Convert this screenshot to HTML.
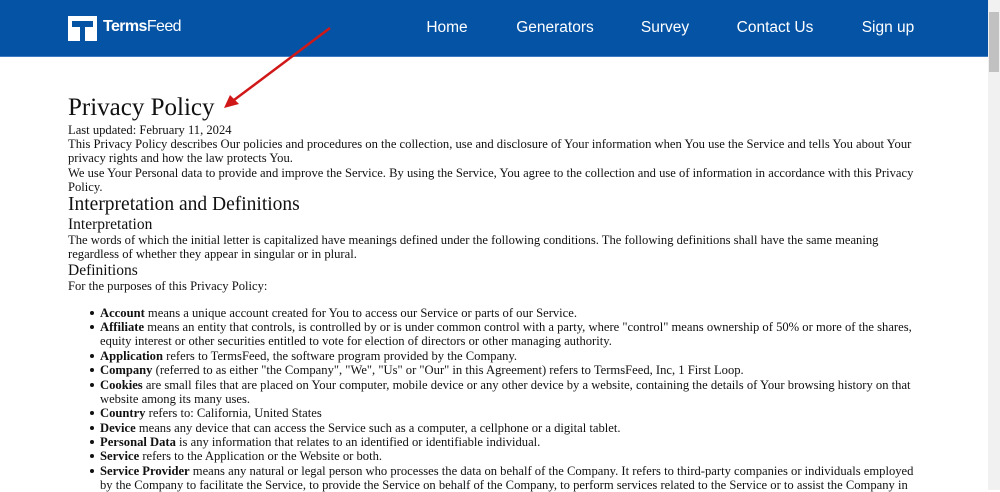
<!DOCTYPE html>
<html><head><meta charset="utf-8"><style>
*{margin:0;padding:0;box-sizing:border-box}
body{width:1000px;height:490px;overflow:hidden;background:#fff;position:relative;font-family:"Liberation Serif",serif;color:#111}
.nav{position:absolute;left:0;top:0;width:988px;height:57px;background:#0553a5;border-bottom:1px solid #3d7cc0}
.nav a{position:absolute;top:19px;color:#fff;font-family:"Liberation Sans",sans-serif;font-size:15.5px;transform:translateX(-50%);white-space:nowrap}
.l{position:absolute;left:68px;font-size:12.6px;line-height:14px;white-space:nowrap}
.li{left:100px}
.li:before{content:"";position:absolute;left:-10px;top:5px;width:4px;height:4px;border-radius:50%;background:#111}
.cont:before{display:none}
.sb{position:absolute;right:0;top:0;width:12px;height:490px;background:#f1f1f1}
.th{position:absolute;right:1px;top:12px;width:10px;height:60px;background:#c1c1c1}
</style></head><body>
<div class="nav">
<svg style="position:absolute;left:68px;top:16px" width="29" height="25" viewBox="0 0 29 25"><rect width="29" height="25" fill="#fff"/><path d="M4 5H25V11H17V25H12V11H4Z" fill="#0553a5"/></svg>
<div style="position:absolute;left:103px;top:18px;color:#fff;font-family:'Liberation Sans',sans-serif;font-size:16px;letter-spacing:-0.6px"><b>Terms</b>Feed</div>
<a style="left:447px">Home</a><a style="left:555px">Generators</a><a style="left:665px">Survey</a><a style="left:775px">Contact Us</a><a style="left:888px">Sign up</a>
</div>
<div class="sb"><div class="th"></div></div>
<svg style="position:absolute;left:0;top:0" width="1000" height="490"><line x1="330" y1="28" x2="234" y2="100" stroke="#d01818" stroke-width="2.5"/><path d="M224 108L230 95L239 104Z" fill="#d01818"/></svg>
<div class="l" style="top:94px;font-size:25px;line-height:28px">Privacy Policy</div>
<div class="l" style="top:123px">Last updated: February 11, 2024</div>
<div class="l" style="top:137px">This Privacy Policy describes Our policies and procedures on the collection, use and disclosure of Your information when You use the Service and tells You about Your</div>
<div class="l" style="top:151px">privacy rights and how the law protects You.</div>
<div class="l" style="top:166px">We use Your Personal data to provide and improve the Service. By using the Service, You agree to the collection and use of information in accordance with this Privacy</div>
<div class="l" style="top:180px">Policy.</div>
<div class="l" style="top:194px;font-size:19.5px;line-height:22px">Interpretation and Definitions</div>
<div class="l" style="top:216px;font-size:15.5px;line-height:17px">Interpretation</div>
<div class="l" style="top:233px">The words of which the initial letter is capitalized have meanings defined under the following conditions. The following definitions shall have the same meaning</div>
<div class="l" style="top:247px">regardless of whether they appear in singular or in plural.</div>
<div class="l" style="top:262px;font-size:15.5px;line-height:17px">Definitions</div>
<div class="l" style="top:279px">For the purposes of this Privacy Policy:</div>
<div class="l li" style="top:306px"><b>Account</b> means a unique account created for You to access our Service or parts of our Service.</div>
<div class="l li" style="top:320px"><b>Affiliate</b> means an entity that controls, is controlled by or is under common control with a party, where "control" means ownership of 50% or more of the shares,</div>
<div class="l li cont" style="top:334px">equity interest or other securities entitled to vote for election of directors or other managing authority.</div>
<div class="l li" style="top:349px"><b>Application</b> refers to TermsFeed, the software program provided by the Company.</div>
<div class="l li" style="top:363px"><b>Company</b> (referred to as either "the Company", "We", "Us" or "Our" in this Agreement) refers to TermsFeed, Inc, 1 First Loop.</div>
<div class="l li" style="top:378px"><b>Cookies</b> are small files that are placed on Your computer, mobile device or any other device by a website, containing the details of Your browsing history on that</div>
<div class="l li cont" style="top:392px">website among its many uses.</div>
<div class="l li" style="top:406px"><b>Country</b> refers to: California, United States</div>
<div class="l li" style="top:421px"><b>Device</b> means any device that can access the Service such as a computer, a cellphone or a digital tablet.</div>
<div class="l li" style="top:435px"><b>Personal Data</b> is any information that relates to an identified or identifiable individual.</div>
<div class="l li" style="top:449px"><b>Service</b> refers to the Application or the Website or both.</div>
<div class="l li" style="top:464px"><b>Service Provider</b> means any natural or legal person who processes the data on behalf of the Company. It refers to third-party companies or individuals employed</div>
<div class="l li cont" style="top:478px">by the Company to facilitate the Service, to provide the Service on behalf of the Company, to perform services related to the Service or to assist the Company in</div>
</body></html>
